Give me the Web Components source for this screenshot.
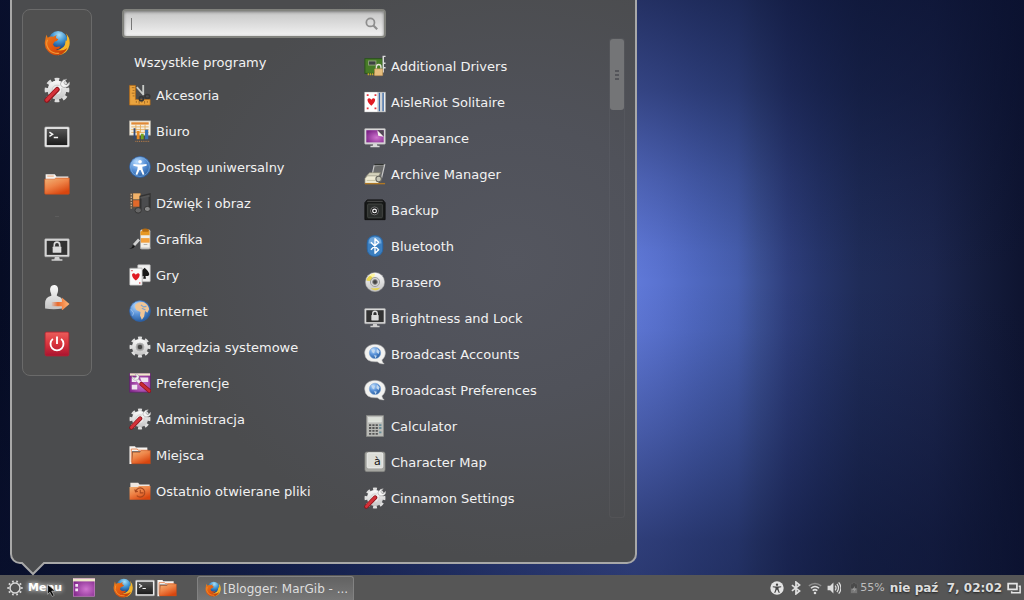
<!DOCTYPE html>
<html lang="pl">
<head>
<meta charset="utf-8">
<title>Menu</title>
<style>
html, body { margin: 0; height: 100%; }
body { font-family: "DejaVu Sans", sans-serif; font-size: 13px; color: #f2f2f2; background: #060b1e; overflow: hidden; }
</style>
</head>
<body>
<desktop-shell>
  <menu-popup>
    <fav-button slot="fav" icon="firefox" label="Firefox"></fav-button>
    <fav-button slot="fav" icon="settings" label="Cinnamon Settings"></fav-button>
    <fav-button slot="fav" icon="terminal" label="Terminal"></fav-button>
    <fav-button slot="fav" icon="folder" label="Pliki"></fav-button>
    <fav-button slot="session" icon="lock" label="Zablokuj"></fav-button>
    <fav-button slot="session" icon="logout" label="Wyloguj"></fav-button>
    <fav-button slot="session" icon="power" label="Zakończ"></fav-button>

    <menu-entry slot="cat" plain>Wszystkie programy</menu-entry>
    <menu-entry slot="cat" icon="accessories">Akcesoria</menu-entry>
    <menu-entry slot="cat" icon="office">Biuro</menu-entry>
    <menu-entry slot="cat" icon="access">Dostęp uniwersalny</menu-entry>
    <menu-entry slot="cat" icon="media">Dźwięk i obraz</menu-entry>
    <menu-entry slot="cat" icon="graphics">Grafika</menu-entry>
    <menu-entry slot="cat" icon="games">Gry</menu-entry>
    <menu-entry slot="cat" icon="internet">Internet</menu-entry>
    <menu-entry slot="cat" icon="system">Narzędzia systemowe</menu-entry>
    <menu-entry slot="cat" icon="prefs">Preferencje</menu-entry>
    <menu-entry slot="cat" icon="settings">Administracja</menu-entry>
    <menu-entry slot="cat" icon="places">Miejsca</menu-entry>
    <menu-entry slot="cat" icon="recent">Ostatnio otwierane pliki</menu-entry>

    <menu-entry slot="app" icon="drivers">Additional Drivers</menu-entry>
    <menu-entry slot="app" icon="solitaire">AisleRiot Solitaire</menu-entry>
    <menu-entry slot="app" icon="appearance">Appearance</menu-entry>
    <menu-entry slot="app" icon="archive">Archive Manager</menu-entry>
    <menu-entry slot="app" icon="backup">Backup</menu-entry>
    <menu-entry slot="app" icon="bluetooth">Bluetooth</menu-entry>
    <menu-entry slot="app" icon="disc">Brasero</menu-entry>
    <menu-entry slot="app" icon="lock">Brightness and Lock</menu-entry>
    <menu-entry slot="app" icon="broadcast">Broadcast Accounts</menu-entry>
    <menu-entry slot="app" icon="broadcast">Broadcast Preferences</menu-entry>
    <menu-entry slot="app" icon="calculator">Calculator</menu-entry>
    <menu-entry slot="app" icon="charmap">Character Map</menu-entry>
    <menu-entry slot="app" icon="settings">Cinnamon Settings</menu-entry>
  </menu-popup>
  <panel-bar slot="panel">
    <span slot="menu">Menu</span>
    <span slot="task">[Blogger: MarGib - ...</span>
    <span slot="battery">55%</span>
    <span slot="clock">nie paź  7, 02:02</span>
  </panel-bar>
</desktop-shell>

<script>
const globe = (cx, cy, r) => `<circle cx="${cx}" cy="${cy}" r="${r}" fill="url(#b)" stroke="#2f62a8" stroke-width=".8"/>`;
const blue = '<radialGradient id="b" cx=".35" cy=".25" r=".8"><stop offset="0" stop-color="#b8dcff"/><stop offset=".5" stop-color="#5b93d8"/><stop offset="1" stop-color="#23599c"/></radialGradient>';
const orange = '<linearGradient id="o" x1="0" y1="0" x2=".6" y2="1"><stop offset="0" stop-color="#f0b478"/><stop offset=".5" stop-color="#ee8347"/><stop offset="1" stop-color="#d9460f"/></linearGradient>';
const purple = '<radialGradient id="p" cx=".6" cy=".6" r=".7"><stop offset="0" stop-color="#cf74cf"/><stop offset="1" stop-color="#7c2387"/></radialGradient>';
const silver = '<linearGradient id="s" x1="0" y1="0" x2="0" y2="1"><stop offset="0" stop-color="#fafafa"/><stop offset="1" stop-color="#c4c4c4"/></linearGradient>';
const gear = '<circle cx="12" cy="12" r="9.6" fill="none" stroke="#dedede" stroke-width="3.6" pathLength="16" stroke-dasharray="1.1 .9" stroke-dashoffset=".55"/><circle cx="12" cy="12" r="8.8" fill="url(#s)"/>';
const wrench = '<path d="M10 14.500 17 7.500" stroke="#f2f2f2" stroke-width="3"/><path d="M16 4.500Q18 1.800 21 2l-2.600 2.800.6 1.800 1.900.6L23.600 4.500Q24 8 21.200 9.300 18 10.500 16 8.500 14.300 6.500 16 4.500Z" fill="#f4f4f4" stroke="#9b9b9b" stroke-width=".6"/><path d="M2.600 21.400 12.200 11.500" stroke="#8d1319" stroke-width="4.600" stroke-linecap="round"/><path d="M2.600 21.200 12 11.500" stroke="#d4323a" stroke-width="3" stroke-linecap="round"/>';
const lockBody = '<path d="M9.500 9V7.300a2.500 2.600 0 0 1 5 0V9" fill="none" stroke="#dcdcdc" stroke-width="1.500"/><rect x="8" y="8.800" width="8" height="5.800" rx=".6" fill="#dcdcdc"/>';
const man = c => `<g fill="${c}"><circle cx="12" cy="6.300" r="2"/><path d="M4.800 8.800 9.500 9.400h5l4.700-.6v1.700l-4.700 1.100.3 2.900 2 5.500-1.700.7-2.500-5.500h-1.200l-2.500 5.500-1.700-.7 2-5.500.3-2.900-4.700-1.100Z"/></g>`;
const bt = (c, w) => `<path d="m7.500 8 8.500 8-4 4V4l4 4-8.500 8" fill="none" stroke="${c}" stroke-width="${w}" stroke-linejoin="round"/>`;
const heart = '<path d="M0 5C-5 1-5-3-2.500-3-1-3 0-1.500 0-1c0-.5 1-2 2.500-2C5-3 5 1 0 5Z" fill="#e01b24"/>';

const ICONS = {
  firefox: `<defs><radialGradient id="fb" cx=".55" cy=".2" r=".8"><stop offset="0" stop-color="#a9e0f7"/><stop offset=".45" stop-color="#3f93d0"/><stop offset="1" stop-color="#0e2f73"/></radialGradient><linearGradient id="ff" x1="0" y1="0" x2="1" y2="1"><stop offset="0" stop-color="#e8801c"/><stop offset=".5" stop-color="#e2560f"/><stop offset="1" stop-color="#b83a08"/></linearGradient></defs>
    <circle cx="13" cy="9.800" r="8.800" fill="url(#fb)"/><path d="M20.300 3.200Q24.600 7.500 23.500 14 21.800 22.500 13 23.200L11 19Q20.500 17 19.800 9.500 20.800 11 21.200 8.500 21.500 5.500 20.300 3.200Z" fill="#f4b52a"/>
    <path d="M2.300 4.300 3.400 7.200Q6 5.500 8.600 6.300L11.800 4.700Q10.800 6.200 11.200 7.600L13.300 8.600Q12.200 10.600 9.700 10.800L8.200 13.300Q10 16.600 13.700 15.200L15.600 15.500Q14 18.200 11 18.200 17 20 21.500 16.500 20.200 20 16.500 22.300 9 25.200 3.700 19.700-.6 15 1.200 9 1.600 6 2.300 4.300Z" fill="url(#ff)"/><path d="M3.200 9Q1 14 5 18.500 8.500 22 14 21.500" fill="none" stroke="#f49a35" stroke-width="1"/>`,
  settings: `<defs>${silver}</defs>${gear}<circle cx="12" cy="12" r="4.500" fill="#ececec" stroke="#c8c8c8" stroke-width=".8"/>${wrench}`,
  system: `<defs>${silver}</defs>${gear}<circle cx="12" cy="12" r="4.300" fill="#999" stroke="#b5b5b5"/><circle cx="12" cy="12" r="2.500" fill="#464646"/>`,
  terminal: `<defs><linearGradient id="t" x1="0" y1="0" x2="0" y2="1"><stop offset="0" stop-color="#555"/><stop offset="1" stop-color="#1b1b1b"/></linearGradient></defs><rect x=".7" y="2.700" width="22.600" height="18.600" rx="1" fill="#f0f0f0" stroke="#a8a8a8" stroke-width=".6"/><rect x="2.500" y="4.500" width="19" height="15" fill="url(#t)"/><path d="m5 7.500 3 2-3 2M9 12.500h4" fill="none" stroke="#f5f5f5" stroke-width="1.300"/>`,
  folder: `<defs>${orange}</defs><path d="M1.500 3H10l1.500 2h11v8h-21Z" fill="#f5f2ef"/><path d="M3 4.700h6" stroke="#f09a66" stroke-width=".8"/><path d="M.6 7.500H9.500L11 6.500H23.400V20.600Q23.400 21.500 22.600 21.500H1.500Q.6 21.500.6 20.600Z" fill="url(#o)" stroke="#c84d18" stroke-width=".5"/>`,
  places: `<defs>${orange}</defs><path d="M.5 2.500h6L7.500 3.800H20v4H3v14H.5Z" fill="#f7f4f1"/><path d="M2.500 20V5.500H9l1 1.300h11" fill="none" stroke="#e9824b" stroke-width="1"/><path d="M4 9h8l1.300-1.800h10V21.500H3Z" fill="url(#o)" stroke="#c84d18" stroke-width=".5"/>`,
  recent: `<defs>${orange}</defs><path d="M1.500 3H10l1.500 2h11v5h-21Z" fill="#eee6e0"/><path d="M.6 7.500H9.500L11 6.500H23.400V21.500H.6Z" fill="url(#o)"/><path d="M7.500 12a5 5 0 1 1 1 5M12.300 10.500v3.500h3.500M6.300 10.300l.8 2.600 2.600-.5" fill="none" stroke="#a8471f" stroke-width="1.200"/>`,
  lock: `<rect x=".7" y="1.700" width="22.600" height="16.600" rx=".8" fill="#dadada" stroke="#aaa" stroke-width=".5"/><rect x="2.500" y="3.500" width="19" height="13" fill="#323232"/>${lockBody}<path d="M10 18.500h4l.6 2H17V22H7v-1.500h2.500Z" fill="#cfcfcf"/>`,
  logout: `<defs>${silver}<linearGradient id="a"><stop offset="0" stop-color="#e8642a" stop-opacity=".1"/><stop offset=".35" stop-color="#ea6a2c"/><stop offset="1" stop-color="#ffb777"/></linearGradient></defs><path d="M9.300 1C12 1 13.300 3 13 6 12.800 8.500 11.800 9.200 11.800 10.500 13 12 17 11.500 17 16v6.500Q9 24 1 22.500V18Q1 12 6.800 10.800 6.800 9.200 5.800 7 4.900 1 9.300 1Z" fill="url(#s)"/><path d="M7 16.500h9.500v-4l7 6-7 6v-4H7Z" fill="url(#a)"/>`,
  power: `<defs><linearGradient id="r" x1="0" y1="0" x2="0" y2="1"><stop offset="0" stop-color="#ec5d5b"/><stop offset=".5" stop-color="#d8333c"/><stop offset="1" stop-color="#a91330"/></linearGradient></defs><rect x="1" y="1" width="22" height="22" rx="1.500" fill="url(#r)" stroke="#b02432" stroke-width=".8"/><path d="M8.200 7.300a6 6 0 1 0 7.600 0M12 5v7" fill="none" stroke="#fff" stroke-width="1.700"/>`,
  accessories: `<path d="M.7 1.500H7V17H23v6H.7Z" fill="#eba43e" stroke="#b96d17" stroke-width=".8"/><path d="M3 4h3M4 7h2M3 10h3M4 13h2M8 18.500v2M11 18.500v3M14 18.500v2M17 18.500v3M20 18.500v2" stroke="#81501b" stroke-width=".7"/><path d="M8.500 3.500 16 12M15.500 1v11" stroke="#c9cbc8" stroke-width="2"/><circle cx="13.500" cy="16" r="2.200" fill="none" stroke="#353535" stroke-width="1.800"/><ellipse cx="20" cy="13.500" rx="2.600" ry="2" fill="none" stroke="#353535" stroke-width="1.800"/>`,
  office: `<rect x=".7" y="1" width="22.600" height="15.500" fill="#f5f0e3" stroke="#b8b3a8" stroke-width=".8"/><rect x="2.500" y="2.500" width="19" height="2.500" fill="#e08a38"/><path d="M2.500 7.500h19M2.500 10.500h19M2.500 13.500h19M7.500 5v9M12.500 5v9M17.500 5v9" stroke="#e3a855" stroke-width=".9"/><path d="M6 9v12" stroke="#314a78" stroke-width="2"/><path d="M8.500 12h3v9h-3Z" fill="#e88a25"/><path d="M13 15h3v6h-3Z" fill="#72a51d"/><path d="M17.500 10.500h3.500V21h-3.500Z" fill="#3972b4"/><path d="M7 23.300h16" stroke="#d18746" stroke-width="1" stroke-dasharray="1 1"/>`,
  access: `<defs>${blue}</defs>${globe(12, 12, 11.4)}<circle cx="12" cy="12" r="10.300" fill="none" stroke="#83b2dd" stroke-width=".7"/>${man('#fff')}`,
  media: `<defs>${orange}</defs><path d="M1 1h12v17H1Z" fill="#5f5142"/><path d="M4.500 1.500H12.500V8H4.500Z" fill="#f2b269"/><path d="M4.500 9H12.500V16H4.500Z" fill="#e2692a"/><path d="M2.500 2v16" stroke="#c9b092" stroke-width="1.500" stroke-dasharray="1.500 1.500"/><path d="M12.500 19V5L22.500 2.500V18" fill="none" stroke="#323232" stroke-width="2.200"/><path d="M12.500 6.500 22.500 4" stroke="#555" stroke-width="2"/><ellipse cx="10" cy="20" rx="3.500" ry="3" fill="#666" stroke="#333"/><ellipse cx="20" cy="18.500" rx="3.300" ry="2.800" fill="#888" stroke="#333"/>`,
  graphics: `<rect x="12.500" y="2" width="10.500" height="21" rx="1.500" fill="#f0eee8" stroke="#aaa" stroke-width=".7"/><path d="M12.500 4Q18 0 22.500 3V8H12.500Z" fill="#e79823"/><path d="M14 1.500Q18-.5 22 2L21 4H15Z" fill="#b66c11"/><path d="M13 11h9.500v5H13Z" fill="#f2a13e"/><path d="M16 18h4M12 22h12" stroke="#aaa"/><path d="M5.500 18.500 11 12.500" stroke="#d2d2d2" stroke-width="3"/><path d="M0 22.500Q4 22 4 18.500L6.500 20Q5 23.500 0 22.500Z" fill="#171717"/>`,
  games: `<rect x="9.500" y=".8" width="13.700" height="18.500" rx=".8" fill="#eee" stroke="#aaa" stroke-width=".7"/><path d="M17 4q-5 5-5 7.500t4 1.500l-.5 3h3L18 13q4.500.5 4-2.500Q21.500 8 17 4Z" fill="#181818"/><rect x=".7" y="4.500" width="13.700" height="18.700" rx=".8" fill="#fafafa" stroke="#999" stroke-width=".7"/><g transform="translate(7.500 13)">${heart}</g><path d="M2.500 6.500h1.500v1.500H2.500ZM11 20h1.500v1.500H11Z" fill="#e05058"/>`,
  internet: `<defs>${blue}</defs>${globe(12, 12, 11.4)}<path d="M7 5Q11 1.500 16 2.500 21 5 22 10L20 14 17.500 12 16.500 18 14 21.500 12 17 12.500 13 8 11 6.500 7.500Z" fill="#f0c596"/><path d="M13 5.500 16 7.500 19 7M14 9l4 2" stroke="#81a4cb" fill="none" stroke-width="1.300"/><path d="M2 10l3 4-1 3" fill="none" stroke="#9dc0ea"/>`,
  prefs: `<defs>${purple}</defs><rect x=".7" y="1.500" width="22.600" height="20.500" fill="url(#p)" stroke="#5e256a" stroke-width=".8"/><path d="M1 2.700h22" stroke="#efe8ca" stroke-width="2.500"/><path d="M3 6h5v5H3ZM3 14h6v5H3ZM12 6h9v5H14Z" fill="#f0e5f0"/><path d="M8 8 13 12.500" stroke="#eee" stroke-width="3"/><path d="M3 4.500 6.500 7 8.500 5 6.500 2Q10 1.500 11 5 11 9 7.500 9 4 9 3 4.500Z" fill="#f3f3f3" stroke="#8c8c8c" stroke-width=".5"/><path d="M13.500 13 22 20.500" stroke="#8d1319" stroke-width="4.400" stroke-linecap="round"/><path d="M13.500 13 22 20.500" stroke="#cb2a32" stroke-width="2.800" stroke-linecap="round"/>`,
  drivers: `<rect x="1" y="4" width="19" height="16" fill="#477b27" stroke="#28511a"/><rect x="5" y="6.500" width="8" height="4.500" fill="#3d4143" stroke="#92a27e"/><path d="M4 21h12" stroke="#c4ac27" stroke-width="2" stroke-dasharray="1.500 .8"/><path d="M23.500 1.500H21V19M21 9h2.500M21 14h2.500" fill="none" stroke="#ddd" stroke-width="1.600"/><path d="M13.500 15v-2a2.500 2.700 0 0 1 5 0v2" fill="none" stroke="#e5e2d9" stroke-width="1.500"/><rect x="11.500" y="15" width="9" height="7.500" rx=".7" fill="#e7bd7d" stroke="#ac8149" stroke-width=".6"/>`,
  solitaire: `<rect x=".8" y="1.300" width="22.500" height="21.500" fill="#eeeeec" stroke="#bbb" stroke-width=".6"/><path d="M16.800 2v20M20.800 2v20" stroke="#3e69a3" stroke-width="1.600"/><path d="M15 2v20M18.800 2v20" stroke="#999" stroke-width=".5"/><rect x="1" y="1.500" width="13.500" height="21" fill="#fff"/><g transform="translate(8 11)">${heart}</g><path d="M3 3.500h2v2H3ZM11.500 3.500h2v2h-2ZM3 18h2v2H3ZM11.500 18h2v2h-2Z" fill="#e7343c"/>`,
  appearance: `<defs>${purple}</defs><rect x=".7" y="1.700" width="22.600" height="17" rx=".8" fill="#dadada" stroke="#aaa" stroke-width=".5"/><rect x="2.500" y="3.500" width="19" height="13.300" fill="url(#p)"/><path d="M14.500 3.500h7v7Z" fill="#4e4a52"/><path d="M14.500 3.500 15.500 9.500 21.500 10.500Z" fill="#f5f5ed"/><path d="M10 18.500h4l.6 2H17V22H7v-1.500h2.500Z" fill="#d8d8d8"/>`,
  archive: `<path d="M11 3 22.500 2 19 17 8 17Z" fill="#6a6b6b" stroke="#c8c8c8" stroke-width="1.300"/><path d="M11.500 1.800h10" stroke="#2f312e" stroke-width="1.600"/><path d="M2 15 6 10.500H18L15 16Z" fill="#d5d2bc" stroke="#8b8877" stroke-width=".7"/><path d="M1 16.500 4 14H14Q18 15 17 20L15 22.500H1Z" fill="#eeead3" stroke="#8b8877" stroke-width=".7"/><circle cx="16" cy="17.500" r="3" fill="#c6c5b5" stroke="#64645d" stroke-width="1.200"/><path d="M1 22.500h22" stroke="#b07824" stroke-width="1.500"/><path d="M3 19h9" stroke="#c4bea0"/>`,
  backup: `<path d="M3.500 1h17L23 4v18.500H1V4Z" fill="#171918" stroke="#0e0e0e"/><path d="M3.500 2.500h17" stroke="#555"/><rect x="4" y="5.500" width="16" height="15" rx="1" fill="#2b2e2c" stroke="#454845"/><circle cx="11.500" cy="13" r="4.300" fill="#151515" stroke="#8a8a8a" stroke-width=".8"/><circle cx="11.500" cy="13" r="2" fill="none" stroke="#fff" stroke-width="1.300"/>`,
  bluetooth: `<defs>${blue}</defs><rect x="3.500" y=".7" width="17" height="22.600" rx="8" fill="#3b7fc0" stroke="#2766a6"/><path d="M5 9Q5 2 12 2t7 7Q12 12 5 9Z" fill="#6fa6da"/>${bt('#fff', 1.5)}`,
  disc: `<defs>${silver}</defs><circle cx="12" cy="12" r="10.500" fill="url(#s)" stroke="#999" stroke-width=".6"/><path d="M8.500 4Q4 6 3 10L9 11ZM8 19q5 3.500 9-.5" fill="#e9d64e" stroke="#e4cf45" stroke-width=".8"/><path d="M6 5q3-3 6-2l-1 4q-3 0-5-2Z" fill="#fff6a0"/><circle cx="12" cy="12" r="5" fill="#d5d5d5" stroke="#9b9b9b"/><circle cx="12" cy="12" r="2.600" fill="#444" stroke="#888"/>`,
  broadcast: `<defs>${blue}</defs><path d="M12 1.500C19 1.500 23.300 5.500 23.300 11Q23.300 15.500 19.500 18.500 20 21.500 22 22.800 16.500 23.200 14.500 20.500 1 21.500.7 11C.7 5.500 5 1.500 12 1.500Z" fill="#f1f1ef" stroke="#b9b9b9" stroke-width=".6"/><circle cx="12" cy="10.800" r="6.200" fill="url(#b)" stroke="#7ba4d4" stroke-width=".6"/><path d="m8 6.500 4 1-1 4-2-1.500ZM14 6l3 3-1 3-2.500-2ZM11 13l3 1-1.500 3Z" fill="#c3d8ee"/>`,
  calculator: `<defs>${silver}</defs><rect x="2.800" y=".7" width="18.500" height="22.600" fill="#b9bab6" stroke="#8c8d89" stroke-width=".8"/><rect x="5" y="2.700" width="14" height="5" fill="#dce0d8" stroke="#e9e9e9" stroke-width=".5"/><path d="M5.500 11h10M5.500 14.200h10M5.500 17.400h10M5.500 20.600h10" stroke="#555" stroke-width="2" stroke-dasharray="2.400 1.200"/><path d="M16.500 11h2.500M16.500 14.200h2.500M16.500 19h2.500" stroke="#668c98" stroke-width="2"/>`,
  charmap: `<rect x="1" y="1" width="22" height="21.500" rx="2" fill="#a5a6a1" stroke="#7e7f7b" stroke-width=".7"/><rect x="3.500" y="2" width="17" height="16.500" rx="1.500" fill="#dcddd8" stroke="#f5f5f5" stroke-width=".8"/><text x="14.500" y="15.500" text-anchor="middle" font-family="DejaVu Sans" font-size="12" fill="#111">à</text>`,
  windowlist: `<defs>${purple}</defs><rect x=".5" y="1.500" width="23" height="19.500" fill="url(#p)" stroke="#c77dc6" stroke-width=".8"/><path d="M0 3.200h24" stroke="#eee8ca" stroke-width="3.200"/><path d="M2.500 7.500h3v3h-3ZM2.500 12.500h3v3h-3Z" fill="#f3e6f3"/>`,
  search: `<circle cx="10" cy="10" r="7.500" fill="none" stroke="#8e8e8e" stroke-width="3.200"/><path d="m15.500 15.500 7 7" stroke="#8e8e8e" stroke-width="4"/>`,
  menugear: `<circle cx="12" cy="12" r="10" fill="none" stroke="#dadada" stroke-width="3" pathLength="20" stroke-dasharray=".8 1.200" stroke-dashoffset=".4"/><circle cx="12" cy="12" r="7.500" fill="#555" stroke="#dadada" stroke-width="2.200"/>`,
  trayaccess: `<circle cx="12" cy="12" r="11.500" fill="#e4e4e4"/>${man('#454545')}`,
  traybt: `<path d="m5 7 13 10-6 5V2l6 5L5 17" fill="none" stroke="#dedede" stroke-width="3"/>`,
  wifi: `<g fill="none" stroke-width="2.600"><path d="M1.500 8.500Q12 0 22.500 8.500" stroke="#8d8d8d"/><path d="M5 12.500q7-6 14 0" stroke="#dedede"/><path d="M8 16.500q4-3.500 8 0" stroke="#dedede"/></g><circle cx="12" cy="20.500" r="2.200" fill="#dedede"/>`,
  sound: `<path d="M1 8h4.500L11 2.500v19L5.500 16H1Z" fill="#dedede"/><path d="M14 8q3 4 0 8M17 5q5.500 7 0 14M20 2.500q8 9.500 0 19" fill="none" stroke="#dedede" stroke-width="2.200"/>`,
  battery: `<path d="M9 1h6v3h4v19H5V4h4Z" fill="#4a4a4a" stroke="#666"/><path d="M6 13h12v9H6Z" fill="#777"/><path d="m14 8-6 8h4l-1 5 6-8h-4Z" fill="#999"/>`,
  screens: `<path d="M2 4.500h15v10H2Z" fill="none" stroke="#e5e5e5" stroke-width="3"/><path d="M20 9h2.500v11H8v-2.500" fill="none" stroke="#e5e5e5" stroke-width="2.600"/>`,
  cursor: `<path d="M3 1v18l4-4 4.500 8 3.500-2-4.500-8H17Z" fill="#080808" stroke="#ddd" stroke-width="1"/>`
};

const define = (name, html, setup) => customElements.define(name, class extends HTMLElement {
  constructor() {
    super();
    const tpl = document.createElement('template');
    tpl.innerHTML = html;
    this.attachShadow({ mode: 'open' }).append(tpl.content.cloneNode(true));
  }
  connectedCallback() { if (setup) setup(this, this.shadowRoot); }
});

const addIcon = (el, root) => {
  if (!el.hasAttribute('icon') || root.querySelector('pix-icon')) return;
  const icon = document.createElement('pix-icon');
  icon.setAttribute('name', el.getAttribute('icon'));
  root.querySelector('button').prepend(icon);
};

define('pix-icon', `<style>
:host { display: block; flex: none; width: var(--size, 22px); height: var(--size, 22px); }
svg { display: block; width: 100%; height: 100%; }
</style><svg viewBox="0 0 24 24" aria-hidden="true"></svg>`,
(el, root) => { root.querySelector('svg').innerHTML = ICONS[el.getAttribute('name')]; });

define('fav-button', `<style>
:host { display: block; --size: 26px; }
button { display: grid; place-items: center; width: 100%; height: 47px; padding: 0; border: 0; background: none; }
</style><button type="button"></button>`,
(el, root) => {
  addIcon(el, root);
  root.querySelector('button').setAttribute('aria-label', el.getAttribute('label'));
});

define('menu-entry', `<style>
:host { display: block; }
button { display: flex; align-items: center; gap: 5px; width: 100%; height: 36px; padding: 0 0 0 7px; border: 0; background: none; color: inherit; font: inherit; text-align: left; white-space: nowrap; }
:host([plain]) button { height: 29px; padding-left: 12px; }
</style><button type="button"><slot></slot></button>`, addIcon);

define('search-box', `<style>
:host { display: flex; align-items: center; box-sizing: border-box; width: 264px; max-width: 100%; height: 29px; padding: 0 6px 0 7px; border: 2px solid #81827d; border-radius: 4px; background: linear-gradient(#c6c6c6, #f1f1f1); box-shadow: inset 0 1px 3px #777; --size: 13px; }
input { flex: 1; min-width: 0; height: 12px; padding: 0 4px; border: 0; outline: 0; color: #333; font: inherit; background: linear-gradient(#777, #777) 0 0 / 1px 100% no-repeat; }
</style><input type="text" aria-label="Szukaj"><pix-icon name="search"></pix-icon>`);

define('scroll-bar', `<style>
:host { display: block; box-sizing: border-box; border: 1px solid #ffffff0a; border-radius: 3px; }
div { display: flex; flex-direction: column; align-items: center; justify-content: center; gap: 2px; height: 71px; border-radius: 3px; background: #747577; }
i { width: 4px; height: 2px; background: #54555a; }
</style><div><i></i><i></i><i></i></div>`);

define('menu-popup', `<style>
:host { position: relative; display: grid; grid-template-columns: 70px minmax(0, 1fr); column-gap: 30px; align-items: start; box-sizing: border-box; width: 627px; max-width: 100%; padding: 9px 10px 44px; border: 2px solid #a8a8a8; border-top: 0; border-radius: 0 0 10px 10px;
  background: radial-gradient(ellipse 340px 300px at 500px 260px, #54565f, #50525a 45%, #4b4c4e); }
aside { box-sizing: border-box; padding: 9px 0 8px; border: 1px solid #6a6a6a; border-radius: 8px; background: #505050; }
hr { width: 4px; height: 1px; margin: 9px auto; border: 0; background: #5c5c5c; }
.lists { display: grid; grid-template-columns: 235px minmax(0, 1fr) 16px; }
.list { padding-top: 10px; }
.apps { padding-bottom: 2px; }
.tail { position: absolute; left: 8px; top: 100%; width: 26px; height: 14px; }
</style>
<aside><slot name="fav"></slot><hr><slot name="session"></slot></aside>
<main><search-box></search-box>
<div class="lists"><div class="list"><slot name="cat"></slot></div><div class="list apps"><slot name="app"></slot></div><scroll-bar></scroll-bar></div></main>
<svg class="tail" viewBox="0 0 26 14" aria-hidden="true"><path d="M0 0H26L24 1 13 12 2 1Z" fill="#4b4c4e"/><path d="M0 1H2L13 12 24 1H26" fill="none" stroke="#a8a8a8" stroke-width="2"/></svg>`);

define('panel-bar', `<style>
:host { display: flex; align-items: center; box-sizing: border-box; height: 25px; padding: 0 3px 0 7px; background: #565656; font-size: 11px; color: #dedede; white-space: nowrap; }
button { display: flex; align-items: center; padding: 0; border: 0; background: none; color: inherit; font: inherit; }
.menu { position: relative; gap: 5px; margin-right: 11px; font-weight: bold; color: #fff; text-shadow: 0 0 5px #fff; --size: 16px; }
.pointer { position: absolute; left: 39px; top: 4px; --size: 13px; }
.quick { display: flex; margin: 0 20px 0 18px; --size: 20px; gap: 2px; }
.task { box-sizing: border-box; gap: 2px; width: 157px; height: 24px; margin-top: 1px; padding: 0 7px; border: 1px solid #828282; border-bottom: 0; border-radius: 3px 3px 0 0; background: linear-gradient(#626262, #777); font-size: 12px; --size: 16px; }
.tray { display: flex; align-items: center; gap: 5px; margin-left: auto; --size: 14px; }
.power { display: flex; align-items: center; --size: 12px; margin-left: 2px; color: #bdbdbd; }
.clock { font-size: 12px; font-weight: bold; white-space: pre; text-shadow: 0 1px 2px #222; }
</style>
<button type="button" class="menu"><pix-icon name="menugear"></pix-icon><slot name="menu"></slot><pix-icon class="pointer" name="cursor"></pix-icon></button>
<button type="button" aria-label="Pulpit"><pix-icon name="windowlist"></pix-icon></button>
<div class="quick"><button type="button" aria-label="Firefox"><pix-icon name="firefox"></pix-icon></button><button type="button" aria-label="Terminal"><pix-icon name="terminal"></pix-icon></button><button type="button" aria-label="Pliki"><pix-icon name="places"></pix-icon></button></div>
<button type="button" class="task"><pix-icon name="firefox"></pix-icon><slot name="task"></slot></button>
<div class="tray"><pix-icon name="trayaccess"></pix-icon><pix-icon name="traybt"></pix-icon><pix-icon name="wifi"></pix-icon><pix-icon name="sound"></pix-icon>
<span class="power"><pix-icon name="battery"></pix-icon><slot name="battery"></slot></span><span class="clock"><slot name="clock"></slot></span><pix-icon name="screens"></pix-icon></div>`);

define('desktop-shell', `<style>
:host { display: grid; grid-template-rows: minmax(0, 1fr) auto; min-height: 100vh;
  background: linear-gradient(#0a1130b0, #0a113080 15%, #0a113038 30%, #0a113008 42%, #0a113000 47%, #0a11300c 55%, #0a113048 72%, #0a113090 90%, #0a1130a0),
  linear-gradient(90deg, #060c24, #0c1638 12%, #263a7c 32%, #4a62b8 50%, #6079d8 62%, #5b74d2 64%, #4f68c0 68%, #465eae 72%, #3c5195 74%, #2e3e7c 77%, #26356b 80%, #1f2c58 84%, #1c264e 91%, #141c3c 96%, #0e1430); }
.work { display: flex; align-items: flex-end; padding: 0 10px 11px; }
</style><div class="work"><slot></slot></div><slot name="panel"></slot>`);
</script>
</body>
</html>
